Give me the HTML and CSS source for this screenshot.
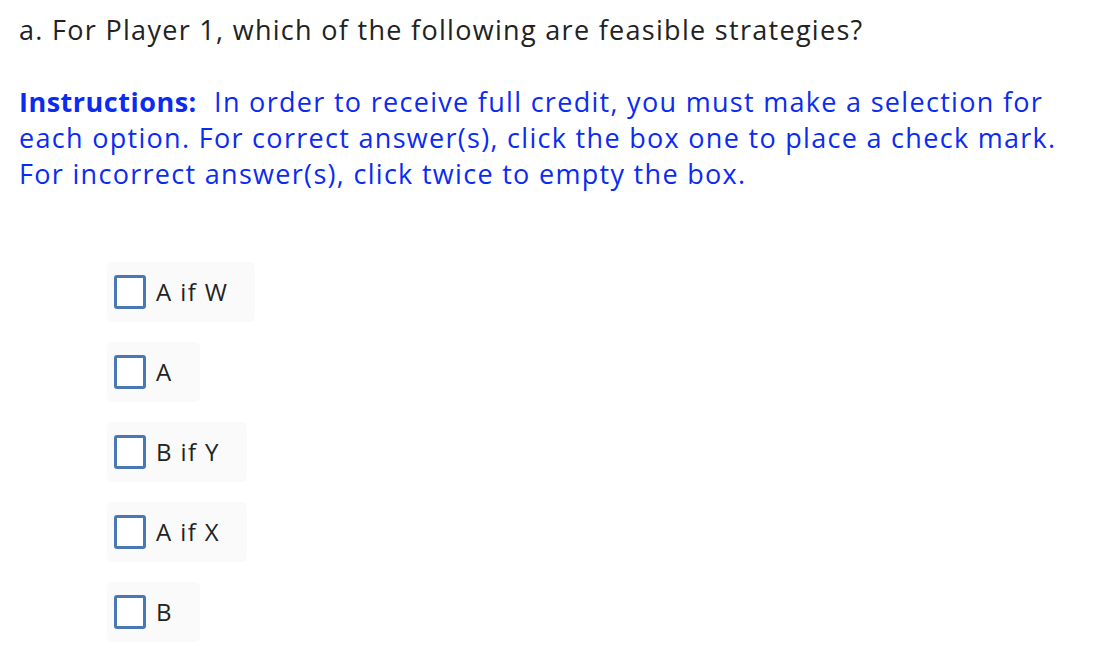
FILE: index.html
```html
<!DOCTYPE html>
<html>
<head>
<meta charset="utf-8">
<link rel="stylesheet" href="styles.css">
</head>
<body>
<div class="page">
  <p class="question">a. For Player 1, which of the following are feasible strategies?</p>
  <p class="instructions"><strong class="lead">Instructions:</strong> In order to receive full credit, you must make a selection for each option. For correct answer(s), click the box one to place a check mark. For incorrect answer(s), click twice to empty the box.</p>
  <ul class="options">
    <li class="option"><span class="box"></span><span class="label">A if W</span></li>
    <li class="option"><span class="box"></span><span class="label">A</span></li>
    <li class="option"><span class="box"></span><span class="label">B if Y</span></li>
    <li class="option"><span class="box"></span><span class="label">A if X</span></li>
    <li class="option"><span class="box"></span><span class="label">B</span></li>
  </ul>
</div>
</body>
</html>
```
FILE: styles.css
```css
html, body {
  margin: 0;
  padding: 0;
  background: #ffffff;
}
.page {
  padding: 12px 0 0 19px;
  font-family: "Open Sans", "Liberation Sans", sans-serif;
  font-size: 27px;
  line-height: 36px;
  letter-spacing: 1.3px;
}
.question {
  margin: 0;
  color: #222222;
}
.instructions {
  margin: 36px 0 0 0;
  color: #0b2bf2;
  width: 1080px;
}
.lead {
  font-weight: 700;
  letter-spacing: 0.5px;
  margin-right: 9px;
}
.options {
  list-style: none;
  margin: 70px 0 0 88px;
  padding: 0;
  display: flex;
  flex-direction: column;
  align-items: flex-start;
  gap: 20px;
}
.option {
  display: flex;
  align-items: center;
  height: 60px;
  padding: 0 27px 0 7px;
  background: #fafafa;
  border-radius: 5px;
  color: #222222;
  font-size: 24px;
  letter-spacing: 1.4px;
}
.box {
  width: 26px;
  height: 28px;
  border: 3px solid #4a78b6;
  border-radius: 3px;
  background: #ffffff;
  margin-right: 10px;
}
```
